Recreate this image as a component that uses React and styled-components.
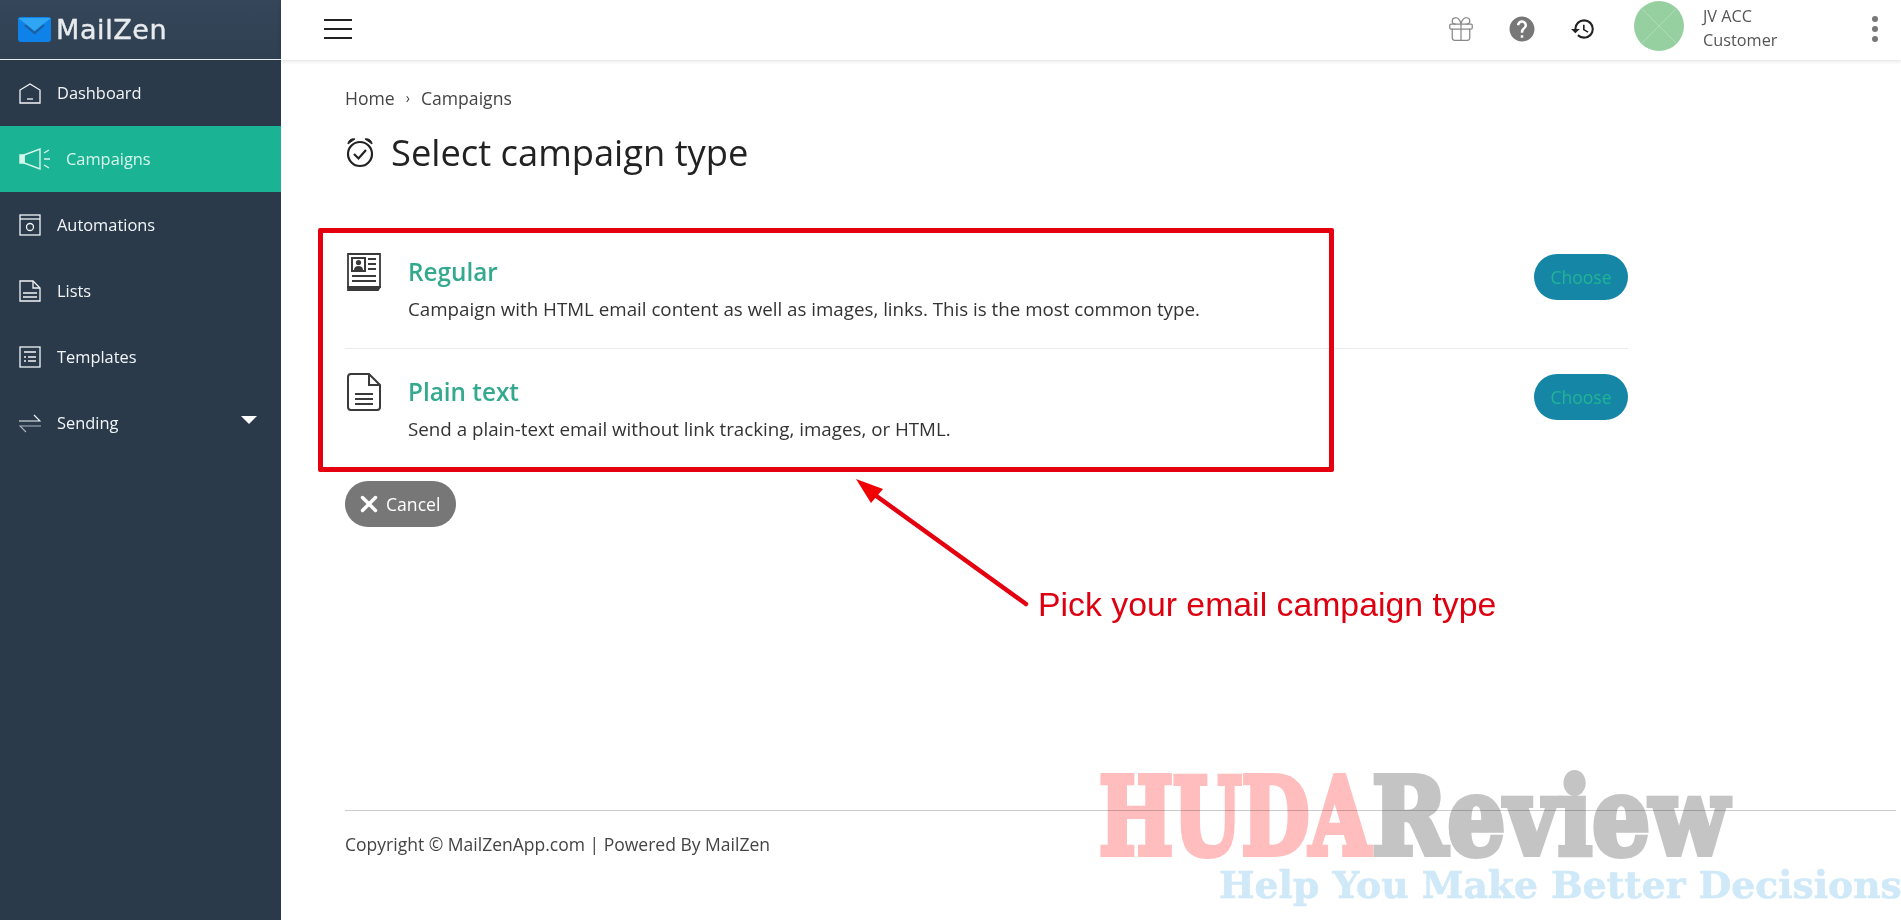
import React from "react";
import styled, { createGlobalStyle } from "styled-components";
import { Gift, X } from "lucide-react";
import { MdHelp, MdHistory } from "react-icons/md";

const Global = createGlobalStyle`
  html, body { margin: 0; padding: 0; background: #fff; }
  body { font-family: "Open Sans", "Liberation Sans", sans-serif; overflow: hidden; }
  * { box-sizing: border-box; }
`;

const Page = styled.div`
  position: relative;
  display: flex;
  width: 1901px;
  height: 920px;
  overflow: hidden;
  background: #fff;
`;

const Sidebar = styled.aside`
  width: 281px;
  flex: none;
  background: #2a3a4a;
  color: #f2f5f7;
`;

const Brand = styled.div`
  height: 60px;
  display: flex;
  align-items: center;
  gap: 5px;
  padding: 0 0 0 18px;
  background: linear-gradient(180deg, #35465a 0%, #2f4052 100%);
  border-bottom: 1px solid #e8ecef;
`;

const BrandName = styled.span`
  font-family: "DejaVu Sans", "Open Sans", sans-serif;
  font-size: 27px;
  letter-spacing: 0.6px;
  -webkit-text-stroke: 0.4px currentColor;
  color: #e8ebee;
`;

const Nav = styled.nav`
  display: flex;
  flex-direction: column;
`;

const NavItem = styled.div`
  height: 66px;
  display: flex;
  align-items: center;
  padding-left: 19px;
  gap: ${(p) => (p.$active ? "15px" : "16px")};
  background: ${(p) => (p.$active ? "#1ab394" : "transparent")};
  color: ${(p) => (p.$active ? "#d8f5ec" : "#f2f5f7")};
  font-size: 16.4px;
`;

const NavLabel = styled.span`
  margin-top: -2px;
`;

const Caret = styled.span`
  margin-left: auto;
  margin-right: 24px;
  margin-top: -6px;
  width: 0;
  height: 0;
  border-left: 8px solid transparent;
  border-right: 8px solid transparent;
  border-top: 8px solid #fff;
`;

const Main = styled.main`
  flex: 1;
  min-width: 0;
  display: flex;
  flex-direction: column;
`;

const Header = styled.header`
  height: 60px;
  flex: none;
  display: flex;
  align-items: center;
  padding-left: 43px;
  box-shadow: 0 1px 4px rgba(0, 0, 0, 0.14);
`;

const Burger = styled.div`
  width: 28px;
  margin-top: -2px;
  display: flex;
  flex-direction: column;
  gap: 6.5px;
  & > i {
    display: block;
    height: 2.5px;
    background: #222;
  }
`;

const HeaderRight = styled.div`
  margin-left: auto;
  display: flex;
  align-items: center;
`;

const IconSlot = styled.div`
  width: 61px;
  margin-top: -2px;
  display: flex;
  align-items: center;
  justify-content: center;
  color: ${(p) => p.$color};
`;

const Avatar = styled.svg`
  width: 50px;
  height: 50px;
  margin-left: 21px;
  margin-top: -8px;
`;

const UserInfo = styled.div`
  margin-left: 19px;
  margin-top: -5px;
  width: 93px;
  font-size: 16.3px;
  line-height: 24px;
  color: #555;
`;

const Dots = styled.div`
  margin-left: 76px;
  margin-right: 23px;
  display: flex;
  flex-direction: column;
  gap: 4px;
  margin-top: -2px;
  & > i {
    width: 6px;
    height: 6px;
    border-radius: 50%;
    background: #777;
  }
`;

const Content = styled.div`
  flex: 1;
  display: flex;
  flex-direction: column;
  padding: 26px 0 0 64px;
`;

const Crumbs = styled.div`
  display: flex;
  align-items: center;
  gap: 11px;
  font-size: 17.6px;
  line-height: 24px;
  color: #444;
`;

const CrumbSep = styled.span`
  font-size: 14px;
`;

const TitleRow = styled.div`
  display: flex;
  align-items: center;
  gap: 16px;
  margin-top: 17px;
  height: 50px;
`;

const Title = styled.h1`
  margin: 0;
  font-size: 36.3px;
  font-weight: 400;
  line-height: 50px;
  color: #222;
`;

const List = styled.div`
  width: 1283px;
  margin-top: 52px;
`;

const Row = styled.div`
  display: flex;
  align-items: flex-start;
  padding: 25px 0 20px;
  border-bottom: ${(p) => (p.$last ? "none" : "1px solid #e9ebec")};
`;

const RowIcon = styled.div`
  width: 63px;
  flex: none;
  margin-top: -1px;
  padding-left: 2px;
`;

const RowBody = styled.div`
  flex: 1;
`;

const RowTitle = styled.div`
  font-size: 24.3px;
  font-weight: 600;
  line-height: 36px;
  color: #33a98f;
`;

const RowDesc = styled.div`
  font-size: 18.76px;
  line-height: 38px;
  color: #333;
`;

const Choose = styled.button`
  width: 94px;
  height: 46px;
  border: none;
  border-radius: 23px;
  background: #1686a6;
  color: #20b595;
  font-family: inherit;
  font-size: 17.5px;
  padding: 0;
`;

const Cancel = styled.button`
  width: 111px;
  height: 46px;
  margin-top: 13px;
  border: none;
  border-radius: 23px;
  background: #777;
  color: #fff;
  font-family: inherit;
  font-size: 17.6px;
  display: flex;
  align-items: center;
  gap: 4px;
  padding: 0 0 0 11px;
`;

const Footer = styled.footer`
  margin-top: auto;
  margin-right: 5px;
  height: 110px;
  padding-top: 21px;
  border-top: 1px solid #ccc;
  font-size: 17.53px;
  line-height: 24px;
  color: #444;
`;

const RedBox = styled.div`
  position: absolute;
  left: 318px;
  top: 228px;
  width: 1016px;
  height: 244px;
  border: 5px solid #e5000f;
  border-radius: 2px;
`;

const Arrow = styled.svg`
  position: absolute;
  left: 840px;
  top: 465px;
`;

const Callout = styled.div`
  position: absolute;
  left: 1038px;
  top: 582px;
  font-family: "Liberation Sans", Arial, sans-serif;
  font-size: 33.8px;
  line-height: 44px;
  white-space: nowrap;
  color: #dd0010;
`;

const Watermark = styled.div`
  position: absolute;
  left: 1099px;
  top: 768px;
  mix-blend-mode: multiply;
  font-family: "DejaVu Serif", serif;
  font-weight: 700;
  white-space: nowrap;
`;

const WmTop = styled.div`
  display: flex;
  height: 97px;
  font-size: 106px;
  line-height: 98px;
  -webkit-text-stroke: 6px currentColor;
`;

const WmWord = styled.span`
  display: block;
  width: ${(p) => p.$width}px;
  transform-origin: left top;
  transform: scaleX(${(p) => p.$scale});
  color: ${(p) => p.$color};
`;

const WmSub = styled.div`
  margin-left: 120px;
  font-size: 37.7px;
  line-height: 40px;
  -webkit-text-stroke: 0.6px currentColor;
  color: #cfe9f8;
`;

const Line = { fill: "none", stroke: "currentColor" };

const HouseIcon = () => (
  <svg width="22" height="22" viewBox="0 0 22 22" {...Line} strokeWidth="1.3">
    <path d="M1 21V8l10-6 10 6v13z" />
    <path d="M8 17h6" />
  </svg>
);
const MegaphoneIcon = () => (
  <svg width="32" height="24" viewBox="0 0 32 24" {...Line} strokeWidth="1.4">
    <path d="M1 8h4v8H1z" fill="currentColor" />
    <path d="M5 8l16-6v20L5 16z" />
    <path d="M25 6l5-3M25 12h6M25 18l5 3" />
  </svg>
);
const AutomationIcon = () => (
  <svg width="22" height="22" viewBox="0 0 22 22" {...Line} strokeWidth="1.3">
    <rect x="1" y="1" width="20" height="20" />
    <path d="M1 5h20" />
    <circle cx="11" cy="13" r="3.5" />
  </svg>
);
const ListIcon = () => (
  <svg width="22" height="22" viewBox="0 0 22 22" {...Line} strokeWidth="1.3">
    <path d="M1 1h13l7 7v13H1z" />
    <path d="M14 1v7h7M4 13h14M4 17h14" />
  </svg>
);
const TemplateIcon = () => (
  <svg width="22" height="22" viewBox="0 0 22 22" {...Line} strokeWidth="1.3">
    <rect x="1" y="1" width="20" height="20" />
    <path d="M5 6h12M5 11h2M9 11h8M5 15h2M9 15h8" />
  </svg>
);
const SendingIcon = () => (
  <svg width="22" height="22" viewBox="0 0 22 22" {...Line} strokeWidth="1.2">
    <path d="M0 9h21L15 3" />
    <path d="M22 14H1l6 6" opacity="0.65" />
  </svg>
);
const LogoMark = () => (
  <svg width="33" height="25" viewBox="0 0 33 25">
    <rect width="33" height="25" rx="3" fill="#0f82ea" />
    <path d="M0 1l16.5 13L33 1z" fill="#2fa6f4" />
    <path d="M7 8l9.500 8L26 8" fill="none" stroke="#1c5f9e" strokeWidth="2.2" />
  </svg>
);
const AlarmIcon = () => (
  <svg width="30" height="32" viewBox="0 0 30 32" fill="none" stroke="#222" strokeWidth="2.2">
    <circle cx="15" cy="18" r="12" />
    <path d="M9 18l4.500 4.500L21 14" />
    <path d="M3 8c0-3 3-6 7-5zM27 8c0-3-3-6-7-5z" fill="#222" strokeWidth="1" />
  </svg>
);
const NewsIcon = () => (
  <svg width="34" height="38" viewBox="0 0 34 38" fill="none" stroke="#3a3a3a" strokeWidth="1.8">
    <path d="M1 1h32v33H1z" />
    <path d="M1 34v3h30l2-3z" fill="#3a3a3a" />
    <rect x="5" y="5" width="13" height="13" strokeWidth="2" />
    <circle cx="11.5" cy="9.5" r="2.6" fill="#3a3a3a" stroke="none" />
    <path d="M7 17c0-3 2-4 4.500-4s4.500 1 4.500 4z" fill="#3a3a3a" stroke="none" />
    <path d="M21 6h8M21 11h8M21 16h8M5 23h24M5 28h24" strokeWidth="1.8" />
  </svg>
);
const DocIcon = () => (
  <svg width="34" height="38" viewBox="0 0 34 38" fill="none" stroke="#3a3a3a" strokeWidth="2">
    <path d="M4 1h18l11 11v22a3 3 0 0 1-3 3H4a3 3 0 0 1-3-3V4a3 3 0 0 1 3-3z" />
    <path d="M22 1v11h11" />
    <path d="M8 21h18M8 26h18M8 31h18" />
  </svg>
);

const nav = [
  ["Dashboard", <HouseIcon />],
  ["Campaigns", <MegaphoneIcon />, true],
  ["Automations", <AutomationIcon />],
  ["Lists", <ListIcon />],
  ["Templates", <TemplateIcon />],
];

export default function App() {
  return (
    <Page>
      <Global />
      <Sidebar>
        <Brand>
          <LogoMark />
          <BrandName>MailZen</BrandName>
        </Brand>
        <Nav>
          {nav.map(([label, icon, active]) => (
            <NavItem key={label} $active={active}>
              {icon}
              <NavLabel>{label}</NavLabel>
            </NavItem>
          ))}
          <NavItem>
            <SendingIcon />
            <NavLabel>Sending</NavLabel>
            <Caret />
          </NavItem>
        </Nav>
      </Sidebar>
      <Main>
        <Header>
          <Burger>
            <i />
            <i />
            <i />
          </Burger>
          <HeaderRight>
            <IconSlot $color="#888">
              <Gift size={30} strokeWidth={1} />
            </IconSlot>
            <IconSlot $color="#777">
              <MdHelp size={30} />
            </IconSlot>
            <IconSlot $color="#222">
              <MdHistory size={26} />
            </IconSlot>
            <Avatar viewBox="0 0 50 50">
              <circle cx="25" cy="25" r="25" fill="#96d0a0" />
              <path d="M7 7l36 36M43 7L7 43" stroke="#aedcb6" strokeWidth="1" />
            </Avatar>
            <UserInfo>
              <div>JV ACC</div>
              <div>Customer</div>
            </UserInfo>
            <Dots>
              <i />
              <i />
              <i />
            </Dots>
          </HeaderRight>
        </Header>
        <Content>
          <Crumbs>
            <span>Home</span>
            <CrumbSep>›</CrumbSep>
            <span>Campaigns</span>
          </Crumbs>
          <TitleRow>
            <AlarmIcon />
            <Title>Select campaign type</Title>
          </TitleRow>
          <List>
            <Row>
              <RowIcon>
                <NewsIcon />
              </RowIcon>
              <RowBody>
                <RowTitle>Regular</RowTitle>
                <RowDesc>
                  Campaign with HTML email content as well as images, links. This is the most common type.
                </RowDesc>
              </RowBody>
              <Choose>Choose</Choose>
            </Row>
            <Row $last>
              <RowIcon>
                <DocIcon />
              </RowIcon>
              <RowBody>
                <RowTitle>Plain text</RowTitle>
                <RowDesc>Send a plain-text email without link tracking, images, or HTML.</RowDesc>
              </RowBody>
              <Choose>Choose</Choose>
            </Row>
          </List>
          <Cancel>
            <X size={26} strokeWidth={3.2} />
            Cancel
          </Cancel>
          <Footer>Copyright © MailZenApp.com | Powered By MailZen</Footer>
        </Content>
      </Main>

      <RedBox />
      <Arrow width="200" height="150" viewBox="0 0 200 150">
        <path d="M186 139L35 30" stroke="#e5000f" strokeWidth="4.500" strokeLinecap="round" />
        <path d="M16 14l27 10-12 14z" fill="#f00000" />
      </Arrow>
      <Callout>Pick your email campaign type</Callout>
      <Watermark>
        <WmTop>
          <WmWord $width={273} $scale={0.74} $color="#ffbdbd">HUDA</WmWord>
          <WmWord $width={358} $scale={0.856} $color="#c4c4c4">Review</WmWord>
        </WmTop>
        <WmSub>Help You Make Better Decisions</WmSub>
      </Watermark>
    </Page>
  );
}
